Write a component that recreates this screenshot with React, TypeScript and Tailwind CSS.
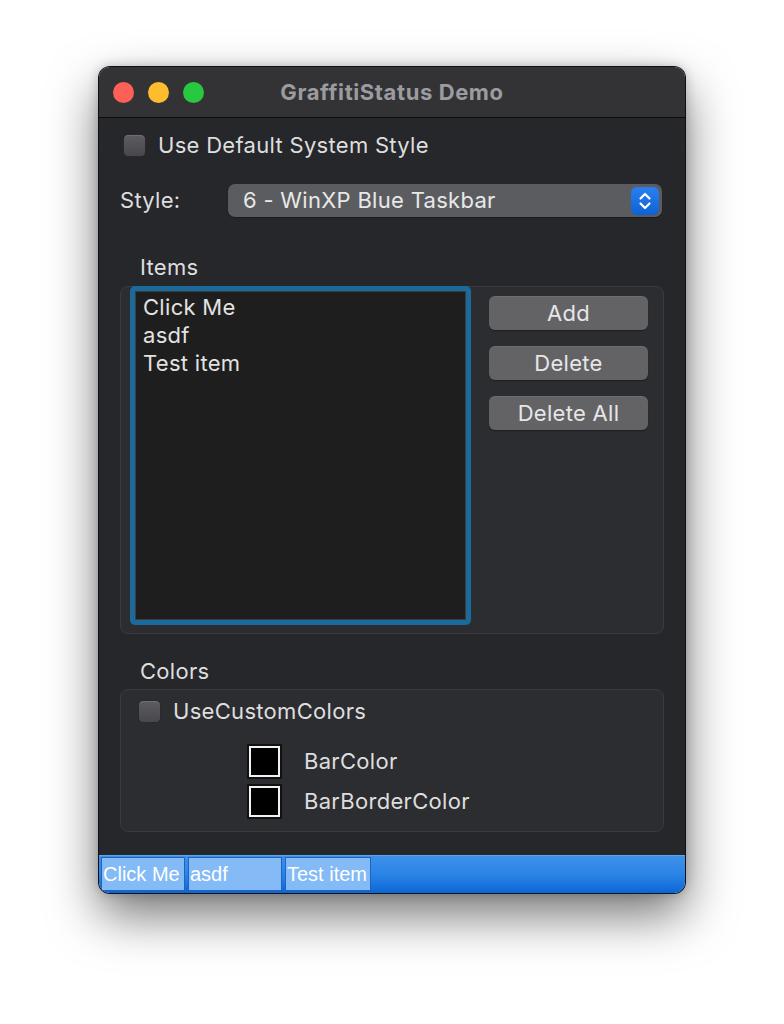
import React from "react";

const font = { fontFamily: "Inter, 'Noto Sans', sans-serif" };

const Checkbox = () => (
  <div className="w-[23px] h-[23px] rounded-[5px] bg-gradient-to-b from-[#5d5d61] to-[#48484c] border border-[#2a2a2d] shadow-[inset_0_1px_0_rgba(255,255,255,0.12)]" />
);

const MacButton = ({ label }: { label: string }) => (
  <div className="w-[159px] h-[34px] rounded-[6px] bg-[#636366] shadow-[0_1px_1px_rgba(0,0,0,0.35),inset_0_1px_0_rgba(255,255,255,0.08)] flex items-center justify-center text-[22px] tracking-[0.3px] text-[#e6e6e6]">
    {label}
  </div>
);

const ColorWell = () => (
  <div className="w-[35px] h-[35px] bg-[#111] p-[2px]">
    <div className="w-full h-full border-2 border-[#f2f2f2] bg-black" />
  </div>
);

export default function App() {
  const items = ["Click Me", "asdf", "Test item"];
  const bar = [
    { label: "Click Me", w: "w-[84px]" },
    { label: "asdf", w: "w-[94px]" },
    { label: "Test item", w: "w-[86px]" },
  ];

  return (
    <div className="w-[784px] h-[1024px] bg-white pt-[67px] pl-[99px]" style={font}>
      <div className="w-[586px] h-[826px] rounded-[11px] overflow-hidden flex flex-col ring-1 ring-[#101012] shadow-[0_22px_50px_rgba(0,0,0,0.55),0_0_12px_rgba(0,0,0,0.25)]">
        {/* title bar */}
        <div className="h-[51px] shrink-0 bg-[#333336] border-b border-[#0e0e10] flex items-center relative">
          <div className="flex items-center gap-[14px] pl-[14px]">
            <div className="w-[21px] h-[21px] rounded-full bg-[#fe5f57]" />
            <div className="w-[21px] h-[21px] rounded-full bg-[#febc2e]" />
            <div className="w-[21px] h-[21px] rounded-full bg-[#28c840]" />
          </div>
          <div className="absolute inset-0 flex items-center justify-center text-[22px] font-bold tracking-[0.6px] text-[#9c9ca0] pt-[1px]">
            GraffitiStatus Demo
          </div>
        </div>

        {/* body */}
        <div className="flex-1 bg-[#26272b] flex flex-col text-[#dedede] text-[22px] tracking-[0.3px]">
          <div className="flex items-center gap-[12px] pl-[24px] mt-[16px] h-[23px]">
            <Checkbox />
            <span>Use Default System Style</span>
          </div>

          <div className="flex items-center mt-[27px] pl-[21px] h-[33px]">
            <span className="w-[108px]">Style:</span>
            <div className="w-[434px] h-[33px] rounded-[7px] bg-[#5b5c60] shadow-[0_1px_1px_rgba(0,0,0,0.3)] flex items-center justify-between pl-[15px] pr-[3px]">
              <span className="text-[#e8e8e8]">6 - WinXP Blue Taskbar</span>
              <div className="w-[28px] h-[28px] rounded-[6px] bg-gradient-to-b from-[#2a7ff0] to-[#0b62d6] flex items-center justify-center">
                <svg width="14" height="20" viewBox="0 0 14 20" fill="none" stroke="white" strokeWidth="2.2" strokeLinecap="round" strokeLinejoin="round">
                  <path d="M2.5 7.5 L7 3 L11.5 7.5" />
                  <path d="M2.5 12.5 L7 17 L11.5 12.5" />
                </svg>
              </div>
            </div>
          </div>

          <div className="mt-[38px] pl-[41px] h-[24px] leading-[24px]">Items</div>

          <div className="mt-[7px] mx-[21px] h-[348px] rounded-[8px] bg-[#2c2d31] border border-[#3a3b3f] flex pl-[9px]">
            <div className="w-[341px] h-[339px] -mt-[1px] rounded-[5px] bg-[#1b6a9c] p-[5px]">
              <div className="w-full h-full bg-[#1e1e1e] border border-[#3c3c3e] pl-[7px] pt-[1px]">
                {items.map((it) => (
                  <div key={it} className="h-[28px] leading-[28px] text-[#e2e2e2]">
                    {it}
                  </div>
                ))}
              </div>
            </div>
            <div className="ml-[18px] mt-[9px] flex flex-col gap-[16px]">
              <MacButton label="Add" />
              <MacButton label="Delete" />
              <MacButton label="Delete All" />
            </div>
          </div>

          <div className="mt-[25px] pl-[41px] h-[24px] leading-[24px]">Colors</div>

          <div className="mt-[6px] mx-[21px] h-[143px] rounded-[8px] bg-[#2c2d31] border border-[#3a3b3f] flex flex-col">
            <div className="flex items-center gap-[12px] pl-[17px] mt-[10px] h-[23px]">
              <Checkbox />
              <span>UseCustomColors</span>
            </div>
            <div className="mt-[21px] pl-[126px] flex flex-col gap-[5px]">
              <div className="flex items-center gap-[22px]">
                <ColorWell />
                <span>BarColor</span>
              </div>
              <div className="flex items-center gap-[22px]">
                <ColorWell />
                <span>BarBorderColor</span>
              </div>
            </div>
          </div>
        </div>

        {/* WinXP-style taskbar */}
        <div
          className="h-[38px] shrink-0 bg-gradient-to-b from-[#3d91ea] via-[#2a84e6] to-[#0867d6] border-t border-[#5aa3ef] flex items-start pt-[1px] pl-[2px] gap-[3px]"
          style={{ fontFamily: "'Liberation Sans', Arial, sans-serif" }}
        >
          {bar.map((b) => (
            <div
              key={b.label}
              className={`${b.w} h-[34px] bg-[#84baf5] border border-[#1f63c4] flex items-center pl-[1px] text-[20px] text-white overflow-hidden whitespace-nowrap`}
            >
              {b.label}
            </div>
          ))}
        </div>
      </div>
    </div>
  );
}
